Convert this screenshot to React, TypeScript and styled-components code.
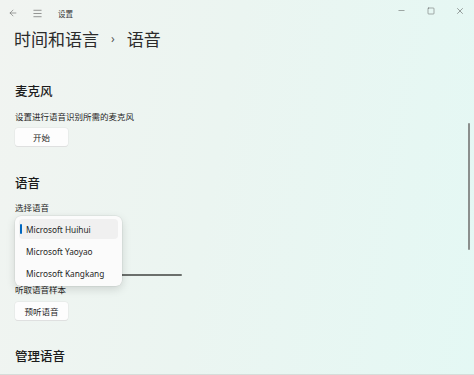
import React from 'react';
import styled, { createGlobalStyle } from 'styled-components';
import { ArrowLeft, Menu, Minus, Square, X } from 'lucide-react';

const GlobalStyle = createGlobalStyle`
  html, body {
    margin: 0;
    padding: 0;
    width: 474px;
    height: 375px;
    overflow: hidden;
  }
  body {
    font-family: "Noto Sans", "Noto Sans CJK SC", sans-serif;
    color: #1b1b1b;
  }
`;

const Window = styled.div`
  position: relative;
  width: 474px;
  height: 375px;
  overflow: hidden;
  display: flex;
  flex-direction: column;
  background: linear-gradient(100deg, #f1f4f1 0%, #ebf5f1 45%, #e4f8f4 100%);
  border-bottom: 1px solid #d6dcd9;
  box-sizing: border-box;
`;

const TitleBar = styled.div`
  height: 26px;
  display: flex;
  align-items: center;
  padding-left: 4px;
  flex-shrink: 0;
`;

const BarButton = styled.div`
  width: 18px;
  height: 18px;
  display: flex;
  align-items: center;
  justify-content: center;
  color: #555;
  margin-right: 6px;
`;

const AppTitle = styled.span`
  font-size: 7.5px;
  color: #333;
  margin-left: 6px;
`;

const Controls = styled.div`
  margin-left: auto;
  display: flex;
  align-items: center;
  height: 100%;
  margin-top: -5px;
`;

const ControlButton = styled.div`
  width: 29px;
  height: 100%;
  display: flex;
  align-items: center;
  justify-content: center;
  color: #444;
`;

const PageTitle = styled.h1`
  margin: -1px 0 0 14px;
  font-size: 17px;
  font-weight: 400;
  color: #2b2b2b;
  display: flex;
  align-items: center;
  height: 26px;
`;

const Chevron = styled.span`
  font-size: 12px;
  color: #555;
  margin: 0 12px 0 12px;
`;

const Content = styled.div`
  padding: 0 15px;
  display: flex;
  flex-direction: column;
  align-items: flex-start;
`;

const SectionTitle = styled.h2<{ $top: number }>`
  margin: ${p => p.$top}px 0 0 0;
  font-size: 12.5px;
  font-weight: 500;
  color: #1b1b1b;
  line-height: 20px;
`;

const Label = styled.div<{ $top: number }>`
  margin-top: ${p => p.$top}px;
  font-size: 8.5px;
  line-height: 14px;
  color: #1f1f1f;
`;

const Button = styled.div<{ $top: number }>`
  margin-top: ${p => p.$top}px;
  width: 53px;
  height: 18px;
  border-radius: 3px;
  background: #fdfdfd;
  box-shadow: 0 0 0 0.5px #e2e4e3, 0 1px 0 #dcdcdc;
  display: flex;
  align-items: center;
  justify-content: center;
  font-size: 8.5px;
  color: #1f1f1f;
`;

const ComboArea = styled.div`
  position: relative;
  margin-top: 1px;
  width: 167px;
  height: 70px;
`;

const SliderTrack = styled.div`
  position: absolute;
  left: 0;
  top: 58px;
  width: 167px;
  height: 2px;
  border-radius: 1px;
  background: #6b6f6c;
`;

const Popup = styled.div`
  position: absolute;
  left: 0;
  top: 0;
  width: 107px;
  height: 70px;
  background: #fbfbfb;
  border-radius: 6px;
  box-shadow: 0 3px 10px rgba(0, 0, 0, 0.14), 0 0 0 0.5px rgba(0, 0, 0, 0.08);
  padding: 3px 4px;
  box-sizing: border-box;
  display: flex;
  flex-direction: column;
  gap: 2px;
`;

const Option = styled.div<{ $selected?: boolean }>`
  position: relative;
  height: 20px;
  border-radius: 4px;
  display: flex;
  align-items: center;
  padding-left: 7px;
  font-size: 8.3px;
  color: #1f1f1f;
  background: ${p => (p.$selected ? '#f0f0f0' : 'transparent')};
  &::before {
    content: '';
    display: ${p => (p.$selected ? 'block' : 'none')};
    position: absolute;
    left: 1px;
    top: 5px;
    width: 2px;
    height: 10px;
    border-radius: 1px;
    background: #0067c0;
  }
`;

const ScrollThumb = styled.div`
  position: absolute;
  right: 4px;
  top: 123px;
  width: 2px;
  height: 127px;
  border-radius: 1px;
  background: #8b8f8d;
`;

const App = () => (
  <Window>
    <GlobalStyle />
    <TitleBar>
      <BarButton>
        <ArrowLeft size={10} strokeWidth={1.3} />
      </BarButton>
      <BarButton>
        <Menu size={11} strokeWidth={1.3} />
      </BarButton>
      <AppTitle>设置</AppTitle>
      <Controls>
        <ControlButton>
          <Minus size={9} strokeWidth={1.2} />
        </ControlButton>
        <ControlButton>
          <Square size={8} strokeWidth={1.3} />
        </ControlButton>
        <ControlButton>
          <X size={10} strokeWidth={1.2} />
        </ControlButton>
      </Controls>
    </TitleBar>
    <PageTitle>
      时间和语言<Chevron>›</Chevron>语音
    </PageTitle>
    <Content>
      <SectionTitle $top={31}>麦克风</SectionTitle>
      <Label $top={8}>设置进行语音识别所需的麦克风</Label>
      <Button $top={4}>开始</Button>
      <SectionTitle $top={28}>语音</SectionTitle>
      <Label $top={7}>选择语音</Label>
      <ComboArea>
        <SliderTrack />
        <Popup>
          <Option $selected>Microsoft Huihui</Option>
          <Option>Microsoft Yaoyao</Option>
          <Option>Microsoft Kangkang</Option>
        </Popup>
      </ComboArea>
      <Label $top={-3}>听取语音样本</Label>
      <Button $top={5}>预听语音</Button>
      <SectionTitle $top={27}>管理语音</SectionTitle>
    </Content>
    <ScrollThumb />
  </Window>
);

export default App;
